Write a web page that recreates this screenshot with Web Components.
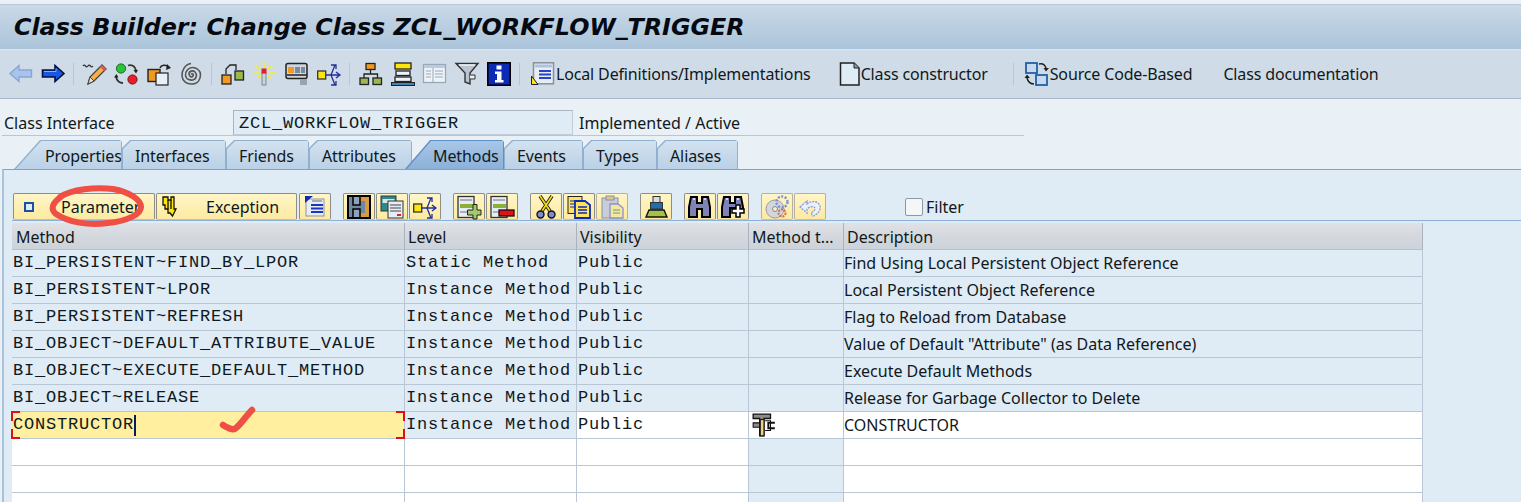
<!DOCTYPE html>
<html>
<head>
<meta charset="utf-8">
<title>Class Builder</title>
<style>
  html, body { margin: 0; height: 502px; overflow: hidden; background: #e9f0f6; }
  body { font: 16px "Noto Sans", sans-serif; color: #101820; }
</style>
</head>
<body>
<sap-title-bar>Class Builder: Change Class ZCL_WORKFLOW_TRIGGER</sap-title-bar>
<sap-toolbar>
  <sap-icon name="back"></sap-icon>
  <sap-icon name="forward"></sap-icon>
  <sap-sep></sap-sep>
  <sap-icon name="pencil"></sap-icon>
  <sap-icon name="check"></sap-icon>
  <sap-icon name="activate"></sap-icon>
  <sap-icon name="spiral"></sap-icon>
  <sap-sep></sap-sep>
  <sap-icon name="where"></sap-icon>
  <sap-icon name="wand"></sap-icon>
  <sap-icon name="monitor"></sap-icon>
  <sap-icon name="branch"></sap-icon>
  <sap-sep></sap-sep>
  <sap-icon name="tree"></sap-icon>
  <sap-icon name="stack"></sap-icon>
  <sap-icon name="list"></sap-icon>
  <sap-icon name="funnel"></sap-icon>
  <sap-icon name="info"></sap-icon>
  <sap-sep></sap-sep>
  <sap-tool icon="localdef" gap="1" style="margin-left:2px">Local Definitions/Implementations</sap-tool>
  <sap-tool icon="page" gap="-2" style="margin-left:20px">Class constructor</sap-tool>
  <sap-sep style="margin-left:17px"></sap-sep>
  <sap-tool icon="swap" gap="1" style="margin-left:2px">Source Code-Based</sap-tool>
  <sap-tool style="margin-left:23px">Class documentation</sap-tool>
</sap-toolbar>
<sap-class-row name="ZCL_WORKFLOW_TRIGGER" status="Implemented / Active">Class Interface</sap-class-row>
<sap-tabstrip>
  <sap-tab width="108" cut="26" pad="30">Properties</sap-tab>
  <sap-tab width="104">Interfaces</sap-tab>
  <sap-tab width="83">Friends</sap-tab>
  <sap-tab width="103">Attributes</sap-tab>
  <sap-tab width="99" cut="25" pad="27" active style="margin-left:-7px">Methods</sap-tab>
  <sap-tab width="79">Events</sap-tab>
  <sap-tab width="74">Types</sap-tab>
  <sap-tab width="81">Aliases</sap-tab>
</sap-tabstrip>
<sap-panel>
  <sap-buttons>
    <sap-button icon="param" width="142" text-left="48">Parameter</sap-button>
    <sap-button icon="exception" width="141" text-left="50" style="margin-left:1px">Exception</sap-button>
    <sap-button icon="b-list" style="margin-left:2px"></sap-button>
    <sap-button icon="b-save" style="margin-left:12px"></sap-button>
    <sap-button icon="b-copy" style="margin-left:1px"></sap-button>
    <sap-button icon="branch" style="margin-left:1px"></sap-button>
    <sap-button icon="b-add" style="margin-left:12px"></sap-button>
    <sap-button icon="b-del" style="margin-left:1px"></sap-button>
    <sap-button icon="b-cut" style="margin-left:12px"></sap-button>
    <sap-button icon="b-paste" style="margin-left:1px"></sap-button>
    <sap-button icon="b-clip" disabled style="margin-left:1px"></sap-button>
    <sap-button icon="b-stamp" style="margin-left:12px"></sap-button>
    <sap-button icon="b-find" style="margin-left:12px"></sap-button>
    <sap-button icon="b-findnext" style="margin-left:1px"></sap-button>
    <sap-button icon="b-disc" disabled style="margin-left:12px"></sap-button>
    <sap-button icon="b-undo" disabled style="margin-left:1px"></sap-button>
    <sap-check style="margin-left:79px">Filter</sap-check>
  </sap-buttons>
  <sap-grid></sap-grid>
</sap-panel>
<sap-ink></sap-ink>

<script>
const ICONS = {
  back: '<path d="M1 11.5 10 3.5V8H22.5V15H10V19.5Z" fill="#a8c4ee" stroke="#88a6d4" stroke-width="1.4"/>',
  forward: '<path d="M23 11.5 14 3.5V8H1.5V15H14V19.5Z" fill="#1557e6" stroke="#05103a" stroke-width="1.6"/><path d="M3 9.5H15V6.5" fill="none" stroke="#7fb0ff"/>',
  pencil: '<path d="M0 4c2-3 3 3 5 0s3 3 5 0" fill="none" stroke="#333" stroke-width="1.3"/><path d="M5 22 7 15 19 3 23 7 11 19Z" fill="#f5b04a" stroke="#444" stroke-width="1.3"/><path d="M19 3 23 7 21 9 17 5Z" fill="#e05a5a"/><path d="M5 22 7 15 11 19Z" fill="#f3e2c4" stroke="#444"/>',
  check: '<circle cx="6" cy="6.5" r="4.6" fill="#27c63a" stroke="#156b1c"/><circle cx="17.5" cy="17.5" r="4.6" fill="#e3202c" stroke="#7c1218"/><path d="M13 3.5c4-1 7 1 8 5M8 21c-3 0-6-2-7-6" fill="none" stroke="#333" stroke-width="1.8"/><path d="M18.5 8 23 8 21 11.5ZM-1 15.5 3.5 15.5 1.5 12Z" fill="#222"/>',
  activate: '<rect x="1" y="7.5" width="12" height="12" fill="#f09a24" stroke="#222" stroke-width="1.4"/><rect x="9" y="11" width="12" height="12" fill="#e8eff8" stroke="#222" stroke-width="1.2"/><path d="M13 6c1-3 6-4 8-1" fill="none" stroke="#222" stroke-width="1.5"/><path d="M19 8 24 6 20 2Z" fill="#222"/>',
  spiral: '<path d="M12 12.5c1-2 3 0 2 1.5s-4 1-4-2 4-4 6-2 2 6-1 7.5-8 0-8.5-4 3-8 7-8 8 3 8 7-2 9-8 9.5-10-3-10.5-8S6 2 12 1.5" fill="none" stroke="#555" stroke-width="1.6"/>',
  where: '<rect x="1" y="13" width="9" height="9" fill="#f09a24" stroke="#222" stroke-width="1.3"/><rect x="14" y="9" width="8.5" height="9" fill="#9cb752" stroke="#222" stroke-width="1.3"/><path d="M5 12V7l4-4h6v5" fill="none" stroke="#222" stroke-width="1.3"/>',
  wand: '<rect x="9" y="11" width="4" height="12" fill="#c8d2dd" stroke="#7d8a98"/><rect x="8.5" y="6.5" width="5" height="5" fill="#e2202c"/><path d="M11 0V5M3 4 7 7M19 4 15 7M0 10H6M16 10H22M4 16 8 13M18 16 14 13" stroke="#f5ef2a" stroke-width="1.6"/>',
  monitor: '<rect x="1" y="1.5" width="21" height="15" rx="2" fill="#ced6de" stroke="#222" stroke-width="1.5"/><rect x="3" y="5" width="6" height="6" fill="#f09a24"/><rect x="10" y="5" width="5" height="6" fill="#7a8aa0"/><rect x="16" y="5" width="4" height="6" fill="#7a8aa0"/><path d="M2 13H22" stroke="#222" stroke-width="1.5"/><rect x="15" y="17" width="7" height="6" fill="#9aa4b0"/>',
  branch: '<rect x="0.7" y="9" width="8" height="8" fill="#ffe60a" stroke="#333" stroke-width="1.3"/><path d="M9 13H22M14 13 18 3M14 13 18 23M19 10 23 13 19 16M14 3H19V7M14 23H19V19" fill="none" stroke="#23309a" stroke-width="1.3"/>',
  tree: '<rect x="7" y="1.5" width="9" height="6" fill="#f09a24" stroke="#222" stroke-width="1.3"/><rect x="1" y="16" width="8.5" height="6.5" fill="#9cb752" stroke="#222" stroke-width="1.3"/><rect x="14" y="16" width="8.5" height="6.5" fill="#9cb752" stroke="#222" stroke-width="1.3"/><path d="M11.5 8V12M5 16V12H18.5V16" fill="none" stroke="#222" stroke-width="1.3"/>',
  stack: '<rect x="4" y="1" width="16" height="6" fill="#ffe60a" stroke="#222" stroke-width="1.3"/><rect x="5" y="9" width="14" height="4.5" fill="#eef2f6" stroke="#222" stroke-width="1.3"/><rect x="4" y="15" width="16" height="4.5" fill="#eef2f6" stroke="#222" stroke-width="1.3"/><rect x="0.5" y="20.5" width="23" height="3" fill="#3b86b8" stroke="#222"/>',
  list: '<rect x="0.5" y="2.5" width="22" height="18" fill="#eef3f8" stroke="#9aa8b6" stroke-width="1.3"/><rect x="1" y="3" width="21" height="3" fill="#b9cbe0"/><path d="M10 6V20M3 9H8M3 12H8M3 15H8M12 9H20M12 12H20M12 15H20" stroke="#9aa8b6"/>',
  funnel: '<path d="M1 1.5H23L15 11V22L10 20V11Z" fill="#b8c4d0" stroke="#333" stroke-width="1.4"/><path d="M4 3H20" stroke="#eef3f8" stroke-width="1.5"/><path d="M15 13h5v4h-5" fill="#e9eef3" stroke="#333"/>',
  info: '<rect x="0.8" y="0.8" width="22.4" height="22.4" fill="#0d2bb5" stroke="#000" stroke-width="1.6"/><rect x="9.5" y="3.5" width="5" height="4" fill="#fff"/><path d="M8 9.5H14.5V18H16.5V20.5H8V18H10V12H8Z" fill="#fff"/>',
  localdef: '<rect x="2.5" y="0.8" width="20" height="21" fill="#e6edf5" stroke="#8a8f96" stroke-width="1.5"/><rect x="4" y="2.5" width="17" height="3" fill="#aec3e0"/><path d="M8 9H20M8 12.5H20M8 16H20" stroke="#2a45c8" stroke-width="1.8"/><path d="M0.5 22.5 7 22.5 0.5 14Z" fill="#ffe60a" stroke="#222"/>',
  page: '<path d="M1.5 1H15L20 6V23H1.5Z" fill="#dfebf5" stroke="#222" stroke-width="1.5"/><path d="M15 1V6H20" fill="#8d99a6" stroke="#222"/>',
  swap: '<rect x="1" y="1" width="11" height="10" fill="#c8d9ea" stroke="#1f5fa8" stroke-width="1.8"/><rect x="11" y="13" width="11" height="10" fill="#c8d9ea" stroke="#1f5fa8" stroke-width="1.8"/><path d="M14 2c4-1 6 1 7 4M9 22c-4 0-6-2-7-6" fill="none" stroke="#222" stroke-width="1.5"/><path d="M18.5 6H24L21 9.5ZM-.5 16H5L2 12.5Z" fill="#222"/>',
  param: '<rect x="8" y="8" width="8" height="8" fill="#dfeaf7" stroke="#1d4fa5" stroke-width="2"/>',
  exception: '<path d="M3 2H8V5H11V2H14V14H16L12.5 21 10 18H8V14H5V10H3Z" fill="#ffe60a" stroke="#111" stroke-width="1.3"/><path d="M8 5V14M11 5V14" stroke="#111" stroke-width="1.3"/>',
  'b-list': '<rect x="3" y="4" width="18" height="17" fill="#e7edf4" stroke="#8a93a0"/><path d="M2 1 10 1 2 8Z" fill="#0d2bb5"/><path d="M9 6H19" stroke="#8a93a0" stroke-width="1.5"/><path d="M8 10H20M8 13.5H20M8 17H20" stroke="#1d35c0" stroke-width="1.8"/>',
  'b-save': '<rect x="1" y="1" width="22" height="22" fill="#7186a3" stroke="#000" stroke-width="2"/><path d="M13 2H22V22H13V18H18V6H13Z" fill="#d89a3e"/><path d="M6 2V10H13V2M6 22V14H13V22" fill="#8ea2bc" stroke="#000" stroke-width="1.5"/>',
  'b-copy': '<rect x="1" y="1" width="15" height="15" fill="#2c8a8a" stroke="#333"/><rect x="2.5" y="4" width="12" height="4" fill="#d5e6e6"/><rect x="8" y="6" width="15" height="17" fill="#e7edf4" stroke="#333"/><path d="M10 10H21M10 13H21M10 16H21" stroke="#444"/><rect x="17" y="19" width="4" height="2" fill="#e0202c"/>',
  'b-add': '<rect x="1" y="1.5" width="16" height="21" fill="#e7edf4" stroke="#333" stroke-width="1.3"/><path d="M3 5H15M3 17H11" stroke="#99a" stroke-width="1.5"/><rect x="3" y="9" width="13" height="4" fill="#8ab03a"/><path d="M16 9.5V15H10.5V20H16V24H20V20H24V15H20V9.5Z" fill="#9fcb6a" stroke="#222"/>',
  'b-del': '<rect x="1" y="1.5" width="16" height="21" fill="#e7edf4" stroke="#333" stroke-width="1.3"/><path d="M3 5H15M3 17H11" stroke="#99a" stroke-width="1.5"/><rect x="3" y="9" width="13" height="4" fill="#8ab03a"/><rect x="9" y="15" width="15" height="6" fill="#e4101c" stroke="#111" stroke-width="1.3"/>',
  'b-cut': '<path d="M6 1 16 16M18 1 8 16" stroke="#111" stroke-width="3.4"/><path d="M6 1 16 16M18 1 8 16" stroke="#f2dc10" stroke-width="1.8"/><circle cx="6.5" cy="19.5" r="3.5" fill="#7d8ad0" stroke="#111" stroke-width="1.4"/><circle cx="17.5" cy="19.5" r="3.5" fill="#7d8ad0" stroke="#111" stroke-width="1.4"/>',
  'b-paste': '<rect x="1" y="1.5" width="14" height="17" fill="#ffe35a" stroke="#222"/><path d="M3 6H13M3 9H13M3 12H13" stroke="#0d2bb5"/><path d="M8 6H18L23 10V23H8Z" fill="#ffe35a" stroke="#0d2bb5" stroke-width="1.8"/><path d="M11 12H20M11 15H20M11 18H20" stroke="#0d2bb5" stroke-width="1.3"/>',
  'b-clip': '<rect x="2" y="3" width="16" height="20" fill="#c9cdd8" stroke="#8a90a8"/><rect x="6" y="1" width="8" height="4" fill="#d8c98a" stroke="#8a90a8"/><path d="M10 9H18L23 13V23H10Z" fill="#f4e8a0" stroke="#8a90d0" stroke-width="1.3"/><path d="M13 15H20M13 18H20" stroke="#a0b080" stroke-width="1.3"/>',
  'b-stamp': '<rect x="9" y="1.5" width="7" height="6" fill="#d8dde4" stroke="#333"/><rect x="6.5" y="7.5" width="12" height="6.5" fill="#1f6fa8" stroke="#333"/><path d="M5 15H20L23 22H2Z" fill="#a8c04a" stroke="#111" stroke-width="1.4"/>',
  'b-find': '<path d="M3 2H9V8H14V2H20L22 12V22H14V14H9V22H1V12Z" fill="#7f82b4" stroke="#000" stroke-width="2"/><path d="M5 4H7M16 4H18" stroke="#cfd2ea" stroke-width="2"/>',
  'b-findnext': '<path d="M3 2H9V8H14V2H20L22 12V14H14V13H9V22H1V12Z" fill="#7f82b4" stroke="#000" stroke-width="2"/><path d="M5 4H7M16 4H18" stroke="#cfd2ea" stroke-width="2"/><path d="M15 14V10H19V14H23V18H19V22H15V18H11V14Z" fill="#fff" stroke="#000" stroke-width="1.5"/>',
  'b-disc': '<circle cx="10" cy="14" r="9" fill="#d5d6dc" stroke="#9a9ca8"/><circle cx="10" cy="14" r="2.5" fill="#f6efc8" stroke="#888"/><circle cx="17" cy="7" r="5.5" fill="none" stroke="#7a8fd8" stroke-width="2.5" stroke-dasharray="2 1.5"/><circle cx="17" cy="18" r="3.5" fill="none" stroke="#d06a50" stroke-width="2" stroke-dasharray="2 1"/>',
  'b-undo': '<path d="M2 12 9 6V9C14 5 20 6 22 11 23 15 20 19 15 21L13 18C17 16 18 13 16 12 14 11 11 12 9 14V18Z" fill="#ecf0fa" stroke="#8a9adc" stroke-width="1.3" stroke-dasharray="2 1"/>',
  hammer: '<path d="M2 2H18V6H12V22H8V6H2Z" fill="#8c8c8c" stroke="#111" stroke-width="1.2"/><rect x="8.5" y="7" width="3.5" height="15" fill="#f0cf7a" stroke="#111"/><path d="M2 10H8V14H2Z" fill="#8c8c8c" stroke="#111"/><path d="M22 10H16V15H22" fill="none" stroke="#111" stroke-width="1.8"/><path d="M13 8H18V17H13" fill="none" stroke="#111"/>'
};

class SapIcon extends HTMLElement {
  connectedCallback() {
    const size = this.getAttribute('size') || 24;
    this.attachShadow({ mode: 'open' });
    this.shadowRoot.innerHTML = `
      <style>
        :host { display: block; flex: none; width: ${size}px; height: ${size}px; }
        svg { display: block; overflow: visible; }
      </style>
      <svg width="${size}" height="${size}" viewBox="0 0 24 24">${ICONS[this.getAttribute('name')] || ''}</svg>`;
  }
}

class SapTitleBar extends HTMLElement {
  constructor() {
    super();
    this.attachShadow({ mode: 'open' });
    this.shadowRoot.innerHTML = `
      <style>
        :host {
          display: flex; align-items: center; box-sizing: border-box; height: 46px;
          margin-top: 4px; padding: 0 0 1px 14px; white-space: nowrap;
          border-top: 1px solid #b9c6d3; border-bottom: 1px solid #dde6ee;
          background: linear-gradient(#c9d9e7, #abc4da);
          font: italic bold 23.8px "DejaVu Sans", sans-serif; color: #060a10;
        }
      </style>
      <slot></slot>`;
  }
}

class SapToolbar extends HTMLElement {
  constructor() {
    super();
    this.attachShadow({ mode: 'open' });
    this.shadowRoot.innerHTML = `
      <style>
        :host {
          display: flex; align-items: center; gap: 8px; box-sizing: border-box; height: 49px;
          padding: 0 0 0 9px; background: #cfdce7; border-bottom: 1px solid #a9b9c9;
        }
      </style>
      <slot></slot>`;
  }
}

class SapSep extends HTMLElement {
  constructor() {
    super();
    this.attachShadow({ mode: 'open' });
    this.shadowRoot.innerHTML = `
      <style>
        :host { display: block; flex: none; width: 1px; height: 22px; margin-right: 1px; background: #b4c6d8; }
      </style>`;
  }
}

class SapTool extends HTMLElement {
  connectedCallback() {
    const icon = this.getAttribute('icon');
    const gap = this.getAttribute('gap') || 2;
    this.attachShadow({ mode: 'open' });
    this.shadowRoot.innerHTML = `
      <style>
        :host { display: flex; align-items: center; white-space: nowrap; letter-spacing: -0.15px; }
        sap-icon { margin-right: ${gap}px; }
      </style>
      ${icon ? `<sap-icon name="${icon}"></sap-icon>` : ''}<slot></slot>`;
  }
}

class SapClassRow extends HTMLElement {
  connectedCallback() {
    this.attachShadow({ mode: 'open' });
    this.shadowRoot.innerHTML = `
      <style>
        :host { display: block; height: 41px; box-sizing: border-box; padding-top: 11px; }
        .row {
          display: flex; align-items: center; width: 1022px; height: 26px; margin-left: 2px;
          border-bottom: 1px solid #bcc6d0; box-sizing: border-box;
        }
        .label { width: 231px; padding-left: 2px; box-sizing: border-box; }
        .field {
          width: 340px; height: 25px; box-sizing: border-box; padding-left: 5px;
          background: #dfebf5; border: 1px solid #c2ccd6; border-top-color: #aab4be; border-left-color: #aab4be;
          font: 17px/26px "Liberation Mono", monospace; letter-spacing: 0.8px;
        }
        .status { margin-left: 6px; }
      </style>
      <div class="row">
        <span class="label"><slot></slot></span>
        <span class="field">${this.getAttribute('name')}</span>
        <span class="status">${this.getAttribute('status')}</span>
      </div>`;
  }
}

class SapTabstrip extends HTMLElement {
  constructor() {
    super();
    this.attachShadow({ mode: 'open' });
    this.shadowRoot.innerHTML = `
      <style>
        :host { display: flex; height: 29px; padding-left: 14px; }
      </style>
      <slot></slot>`;
  }
}

class SapTab extends HTMLElement {
  connectedCallback() {
    const cut = this.getAttribute('cut') || 8;
    const pad = this.getAttribute('pad') || 12;
    const active = this.hasAttribute('active');
    this.attachShadow({ mode: 'open' });
    this.shadowRoot.innerHTML = `
      <style>
        :host {
          display: block; position: relative; z-index: ${active ? 1 : 0}; flex: none;
          width: ${this.getAttribute('width')}px; height: 29px; letter-spacing: -0.1px;
          background: ${active ? '#5f8fc4' : '#8fb0cf'};
          clip-path: polygon(${cut}px 0, calc(100% - 2px) 0, 100% 2px, 100% 100%, 0 100%, 0 ${cut == 8 ? '8px' : '100%'});
        }
        .face {
          box-sizing: border-box; height: 100%; padding-left: ${pad}px; line-height: 31px; white-space: nowrap;
          margin: 1px 1px 0 1px;
          background: ${active ? 'linear-gradient(#a9c6e6, #8bb0d8)' : 'linear-gradient(#d3e2ef, #b9d0e6)'};
          clip-path: polygon(${cut}px 0, 100% 0, 100% 100%, 0 100%, 0 ${cut == 8 ? '8px' : '100%'});
        }
      </style>
      <div class="face"><slot></slot></div>`;
  }
}

class SapPanel extends HTMLElement {
  constructor() {
    super();
    this.attachShadow({ mode: 'open' });
    this.shadowRoot.innerHTML = `
      <style>
        :host {
          display: block; height: 333px; margin-left: 2px; box-sizing: border-box; overflow: hidden;
          padding: 23px 0 0 8px; background: #dfebf5;
          border-top: 1px solid #7da3cc; border-left: 2px solid #a9c3dd;
        }
      </style>
      <slot></slot>`;
  }
}

class SapButtons extends HTMLElement {
  constructor() {
    super();
    this.attachShadow({ mode: 'open' });
    this.shadowRoot.innerHTML = `
      <style>
        :host { display: flex; align-items: center; height: 27px; padding-left: 1px; }
      </style>
      <slot></slot>`;
  }
}

class SapButton extends HTMLElement {
  connectedCallback() {
    const width = this.getAttribute('width') || 32;
    const left = this.getAttribute('text-left');
    const disabled = this.hasAttribute('disabled');
    this.attachShadow({ mode: 'open' });
    this.shadowRoot.innerHTML = `
      <style>
        :host {
          display: flex; align-items: center; flex: none; box-sizing: border-box; position: relative;
          width: ${width}px; height: 27px; padding-left: 3px;
          border: 1px solid ${disabled ? '#b6b2a2' : '#8e8e86'}; border-bottom-color: #c7c2a0; border-radius: 2px;
          background: linear-gradient(#fff6c8, #fdeaa0); white-space: nowrap;
        }
        span { ${left ? `position: absolute; left: ${left - 1}px; top: 2px;` : ''} }
      </style>
      <sap-icon name="${this.getAttribute('icon')}"></sap-icon><span><slot></slot></span>`;
  }
}

class SapCheck extends HTMLElement {
  constructor() {
    super();
    this.attachShadow({ mode: 'open' });
    this.shadowRoot.innerHTML = `
      <style>
        :host { display: flex; align-items: center; gap: 3px; }
        i {
          display: block; width: 18px; height: 18px; box-sizing: border-box; background: #f4f6f8;
          border: 1px solid #8d98a4; border-radius: 2px;
        }
      </style>
      <i></i><slot></slot>`;
  }
}

const COLUMNS = ['Method', 'Level', 'Visibility', 'Method t...', 'Description'];
const ROWS = [
  ['BI_PERSISTENT~FIND_BY_LPOR', 'Static Method', 'Public', '', 'Find Using Local Persistent Object Reference'],
  ['BI_PERSISTENT~LPOR', 'Instance Method', 'Public', '', 'Local Persistent Object Reference'],
  ['BI_PERSISTENT~REFRESH', 'Instance Method', 'Public', '', 'Flag to Reload from Database'],
  ['BI_OBJECT~DEFAULT_ATTRIBUTE_VALUE', 'Instance Method', 'Public', '', 'Value of Default "Attribute" (as Data Reference)'],
  ['BI_OBJECT~EXECUTE_DEFAULT_METHOD', 'Instance Method', 'Public', '', 'Execute Default Methods'],
  ['BI_OBJECT~RELEASE', 'Instance Method', 'Public', '', 'Release for Garbage Collector to Delete']
];

class SapGrid extends HTMLElement {
  connectedCallback() {
    this.attachShadow({ mode: 'open' });
    const cell = (cls, html) => `<div class="c ${cls}">${html}</div>`;
    let body = COLUMNS.map((c, i) => cell(i ? 'h' : 'h first', c)).join('');
    ROWS.forEach((r) => {
      body += r.map((c, i) => cell(i < 3 ? 'm' : '', c)).join('');
    });
    // the row being edited
    body += cell('m edit', `CONSTRUCTOR<b class="caret"></b><u class="tl"></u><u class="tr"></u><u class="bl"></u><u class="br"></u>`);
    body += cell('m', 'Instance Method') + cell('m w', 'Public');
    body += cell('w', '<sap-icon name="hammer" size="26"></sap-icon>') + cell('w', 'CONSTRUCTOR');
    for (let i = 0; i < 3; i++) {
      body += cell('w', '') + cell('w', '') + cell('w', '') + cell('', '') + cell('w', '');
    }
    this.shadowRoot.innerHTML = `
      <style>
        :host {
          display: block; box-sizing: border-box; padding-top: 2px;
          border-top: 1px solid #8fb0d8;
        }
        .g {
          display: grid; grid-template-columns: 393px 172px 172px 95px 579px; grid-auto-rows: 27px;
          width: 1411px;
        }
        .c {
          position: relative; box-sizing: border-box; white-space: nowrap;
          border-right: 1px solid #b8c6d6; border-bottom: 1px solid #b8c6d6; line-height: 26px;
        }
        .h {
          padding-left: 3px; line-height: 28px;
          background: linear-gradient(#dfe2e5 0, #d6dadf 40%, #ccd2da 100%);
          border-right-color: #a9b2bd; border-bottom-color: #b8c0ca;
        }
        .first { padding-left: 4px; }
        .m { padding-left: 1px; font: 17px/26px "Liberation Mono", monospace; letter-spacing: 0.8px; }
        .w { background: #fff; }
        .edit { background: #ffef9e; }
        .caret { position: absolute; left: 122px; top: 3px; width: 2px; height: 21px; background: #0a1a5c; }
        u { position: absolute; width: 7px; height: 8px; border: 0 solid #dd1018; }
        .tl { left: -1px; top: -1px; border-width: 2px 0 0 2px; }
        .tr { right: -1px; top: -1px; border-width: 2px 2px 0 0; }
        .bl { left: -1px; bottom: -1px; border-width: 0 0 2px 2px; }
        .br { right: -1px; bottom: -1px; border-width: 0 2px 2px 0; }
        sap-icon { margin-left: 2px; }
      </style>
      <div class="g">${body}</div>`;
  }
}

class SapInk extends HTMLElement {
  constructor() {
    super();
    this.attachShadow({ mode: 'open' });
    this.shadowRoot.innerHTML = `
      <style>
        :host { position: absolute; left: 0; top: 0; width: 1521px; height: 502px; pointer-events: none; }
        svg { display: block; }
        path { fill: none; stroke: #ef4f45; stroke-linecap: round; stroke-linejoin: round; }
      </style>
      <svg width="1521" height="502" viewBox="0 0 1521 502">
        <path stroke-width="6" d="M60 197C72 189 95 187 113 189 130 192 141 200 141 207 141 214 128 221 108 223 88 226 68 222 56 214 50 209 52 203 62 196"/>
        <path stroke-width="6.5" d="M223 425C228 428 233 431 236 428 241 424 246 416 252 410"/>
      </svg>`;
  }
}

customElements.define('sap-icon', SapIcon);
customElements.define('sap-title-bar', SapTitleBar);
customElements.define('sap-toolbar', SapToolbar);
customElements.define('sap-sep', SapSep);
customElements.define('sap-tool', SapTool);
customElements.define('sap-class-row', SapClassRow);
customElements.define('sap-tabstrip', SapTabstrip);
customElements.define('sap-tab', SapTab);
customElements.define('sap-panel', SapPanel);
customElements.define('sap-buttons', SapButtons);
customElements.define('sap-button', SapButton);
customElements.define('sap-check', SapCheck);
customElements.define('sap-grid', SapGrid);
customElements.define('sap-ink', SapInk);
</script>
</body>
</html>
